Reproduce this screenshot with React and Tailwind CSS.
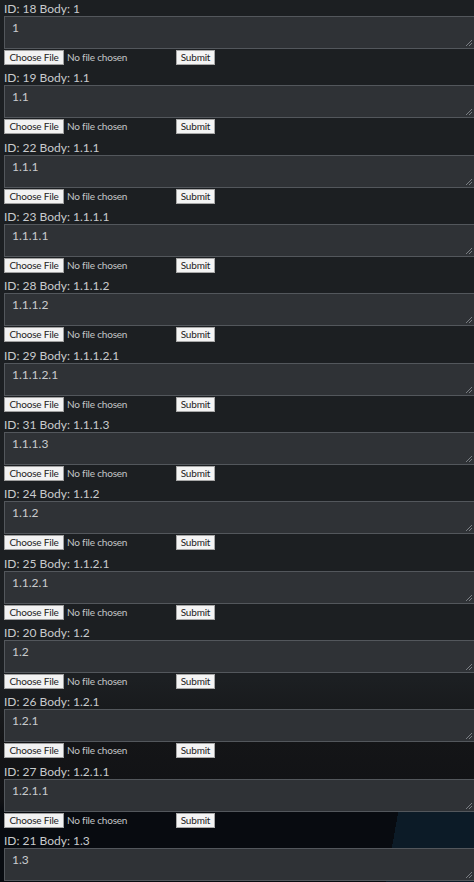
import React from "react";

const items = [
  ["18", "1"],
  ["19", "1.1"],
  ["22", "1.1.1"],
  ["23", "1.1.1.1"],
  ["28", "1.1.1.2"],
  ["29", "1.1.1.2.1"],
  ["31", "1.1.1.3"],
  ["24", "1.1.2"],
  ["25", "1.1.2.1"],
  ["20", "1.2"],
  ["26", "1.2.1"],
  ["27", "1.2.1.1"],
  ["21", "1.3"],
];

function Block({ id, body }) {
  return (
    <div className="flex flex-col mb-[4.33px]">
      <div className="h-[16px] pl-[4px] pt-[2px] text-[12px] leading-[14px] text-[#c9cbce]">
        ID: {id} Body: {body}
      </div>
      <div className="relative ml-[4px] w-[472px] h-[33px] bg-[#2f3236] border border-[#53575c] pl-[7px] pt-[3px] text-[12px] leading-[16px] text-[#c9cbce]">
        {body}
        <svg className="absolute right-[2px] bottom-[1px]" width="8" height="8" viewBox="0 0 8 8">
          <path d="M7 1 L1 7 M7 4 L4 7" stroke="#7a7e83" strokeWidth="1" />
        </svg>
      </div>
      <div className="mt-[1px] h-[15px] flex items-center text-[10px] leading-[13px] tracking-[-0.2px]">
        <span className="ml-[4px] w-[60px] h-[15px] flex items-center justify-center bg-[#f2f2f2] border border-[#a0a0a0] text-[#222]">
          Choose File
        </span>
        <span className="ml-[3px] w-[109px] text-[#c4c6c8]">No file chosen</span>
        <span className="w-[39px] h-[15px] flex items-center justify-center bg-[#f4f4f4] border border-[#a8a8a8] text-[#222]">
          Submit
        </span>
      </div>
    </div>
  );
}

export default function App() {
  return (
    <div
      className="min-h-[882px] h-[882px] overflow-hidden bg-[linear-gradient(to_bottom,#1c1f22_0px,#1c1f22_680px,#141517_740px,#111215_800px,rgba(10,12,16,0)_812px),linear-gradient(100deg,#080b10_86%,#0c1b27_86%)]"
      style={{ fontFamily: "Lato, 'Noto Sans', sans-serif" }}
    >
      {items.map(([id, body]) => (
        <Block key={id} id={id} body={body} />
      ))}
    </div>
  );
}
